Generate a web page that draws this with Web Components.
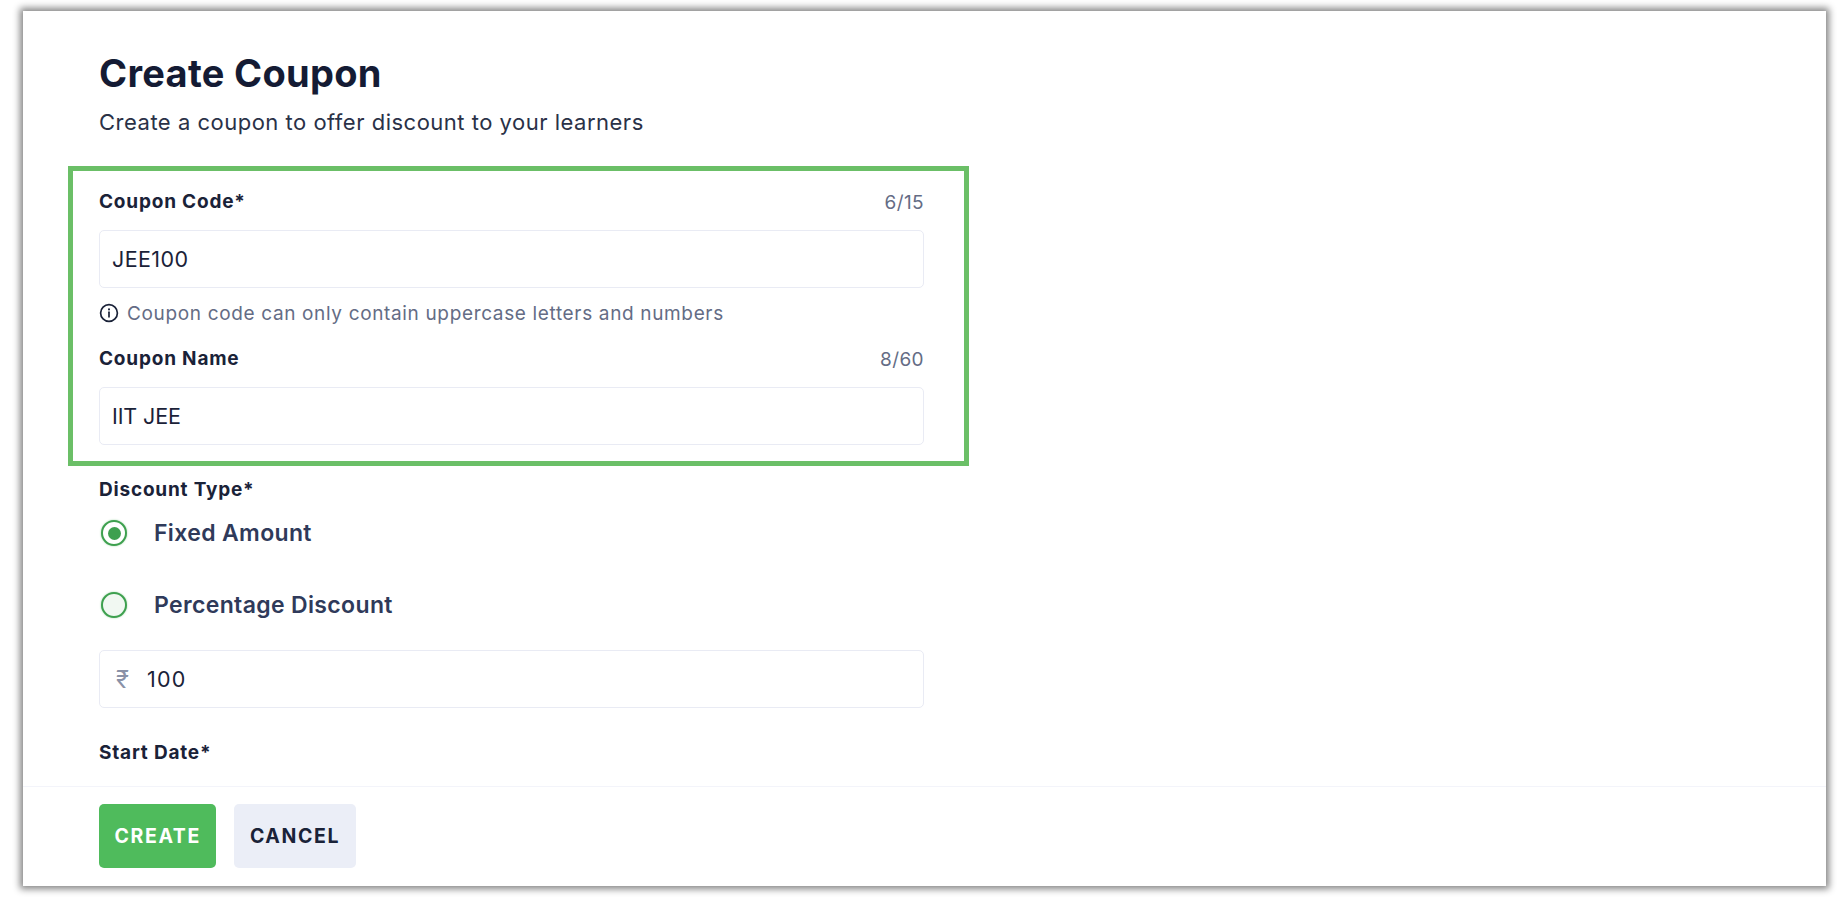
<!DOCTYPE html>
<html lang="en">
<head>
<meta charset="utf-8">
<title>Create Coupon</title>
<style>
  html, body { margin: 0; height: 100%; background: #fff; }
  body { font-family: "Inter", "Noto Sans", sans-serif; color: #1a2238; overflow: hidden; }
</style>
</head>
<body>
<coupon-panel>
  <coupon-heading title-text="Create Coupon" sub-text="Create a coupon to offer discount to your learners"></coupon-heading>
  <highlight-box>
    <text-field label="Coupon Code*" count="6/15" value="JEE100" hint="Coupon code can only contain uppercase letters and numbers" style="--value-spacing:0.4px"></text-field>
    <text-field label="Coupon Name" count="8/60" value="IIT JEE" style="--value-spacing:-0.1px"></text-field>
  </highlight-box>
  <field-label style="margin-top:33px">Discount Type*</field-label>
  <radio-option checked style="margin-top:-5px">Fixed Amount</radio-option>
  <radio-option>Percentage Discount</radio-option>
  <text-field value="100" prefix="₹" style="margin-top:9px;--value-spacing:1.2px"></text-field>
  <field-label style="margin-top:33px">Start Date*</field-label>
  <action-button slot="footer" kind="primary">CREATE</action-button>
  <action-button slot="footer">CANCEL</action-button>
</coupon-panel>

<script>
class CouponPanel extends HTMLElement {
    constructor() {
        super();
        this.attachShadow({ mode: 'open' });
        this.shadowRoot.innerHTML = `
        <style>
            :host {
                display: flex;
                flex-direction: column;
                box-sizing: border-box;
                margin: 11px 22px 11px 23px;
                height: 875px;
                background: #fff;
                box-shadow: 0 0 7px 3px #848484;
            }
            .content {
                flex: 1;
                min-height: 0;
                overflow: hidden;
                padding: 0 76px;
                width: 825px;
            }
            .footer {
                display: flex;
                gap: 18px;
                height: 100px;
                box-sizing: border-box;
                padding: 17px 76px 0;
                border-top: 1px solid #f3f4fa;
            }
        </style>
        <div class="content"><slot></slot></div>
        <div class="footer"><slot name="footer"></slot></div>
        `;
    }
}
customElements.define('coupon-panel', CouponPanel);

class CouponHeading extends HTMLElement {
    constructor() {
        super();
        this.attachShadow({ mode: 'open' });
        this.shadowRoot.innerHTML = `
        <style>
            :host { display: block; padding-top: 38px; }
            h1 {
                margin: 0;
                font-size: 38px;
                line-height: 48px;
                font-weight: 700;
                letter-spacing: 0.3px;
                color: #141b34;
            }
            p {
                margin: 11px 0 0;
                font-size: 22px;
                line-height: 28px;
                font-weight: 400;
                letter-spacing: 0.5px;
                color: #2a3147;
            }
        </style>
        <h1>${this.getAttribute('title-text')}</h1>
        <p>${this.getAttribute('sub-text')}</p>
        `;
    }
}
customElements.define('coupon-heading', CouponHeading);

class HighlightBox extends HTMLElement {
    constructor() {
        super();
        this.attachShadow({ mode: 'open' });
        this.shadowRoot.innerHTML = `
        <style>
            :host { display: block; position: relative; padding-top: 54px; }
            .frame {
                position: absolute;
                left: -31px;
                right: -45px;
                top: 30px;
                bottom: -21px;
                border: 5px solid #6bbf67;
                pointer-events: none;
            }
        </style>
        <slot></slot>
        <div class="frame"></div>
        `;
    }
}
customElements.define('highlight-box', HighlightBox);

class FieldLabel extends HTMLElement {
    constructor() {
        super();
        this.attachShadow({ mode: 'open' });
        this.shadowRoot.innerHTML = `
        <style>
            :host {
                display: block;
                font-size: 19px;
                line-height: 24px;
                font-weight: 700;
                letter-spacing: 0.8px;
                color: #1a2238;
            }
        </style>
        <slot></slot>
        `;
    }
}
customElements.define('field-label', FieldLabel);

class TextField extends HTMLElement {
    constructor() {
        super();
        this.attachShadow({ mode: 'open' });
        const label = this.getAttribute('label');
        const count = this.getAttribute('count');
        const hint = this.getAttribute('hint');
        const prefix = this.getAttribute('prefix');
        this.shadowRoot.innerHTML = `
        <style>
            :host { display: block; }
            .top {
                display: flex;
                justify-content: space-between;
                align-items: center;
                height: 24px;
                margin-bottom: 16px;
            }
            .count { font-size: 19px; letter-spacing: 0.4px; color: #646c85; }
            .box {
                display: flex;
                align-items: center;
                gap: 18px;
                height: 58px;
                box-sizing: border-box;
                padding: 0 12px;
                border: 1px solid #e9ebf4;
                border-radius: 5px;
                font-size: 21.5px;
                color: #1a2238;
            }
            .value { letter-spacing: var(--value-spacing, 0); }
            .prefix { color: #8a92a8; font-size: 24px; margin-left: 4px; }
            .hint {
                display: flex;
                align-items: center;
                gap: 8px;
                height: 24px;
                margin-top: 13px;
                margin-bottom: 22px;
                font-size: 19px;
                letter-spacing: 0.65px;
                color: #646c85;
            }
            .hint svg { width: 20px; height: 20px; flex: none; }
        </style>
        ${label ? `<div class="top"><field-label>${label}</field-label><span class="count">${count}</span></div>` : ''}
        <div class="box">
            ${prefix ? `<span class="prefix">${prefix}</span>` : ''}
            <span class="value">${this.getAttribute('value')}</span>
        </div>
        ${hint ? `<div class="hint">
            <svg viewBox="0 0 20 20" fill="none" stroke="#1a2238" stroke-width="1.7" stroke-linecap="round">
                <circle cx="10" cy="10" r="8.4"/>
                <path d="M10 9.2v4.6"/>
                <path d="M10 6.2v.3" stroke-width="2"/>
            </svg>
            <span>${hint}</span>
        </div>` : ''}
        `;
    }
}
customElements.define('text-field', TextField);

class RadioOption extends HTMLElement {
    constructor() {
        super();
        this.attachShadow({ mode: 'open' });
        const checked = this.hasAttribute('checked');
        this.shadowRoot.innerHTML = `
        <style>
            :host {
                display: flex;
                align-items: center;
                gap: 27px;
                height: 72px;
                padding-left: 2px;
                font-size: 23px;
                font-weight: 600;
                letter-spacing: 0.35px;
                color: #2f3a5a;
            }
            .dot {
                width: 26px;
                height: 26px;
                box-sizing: border-box;
                border-radius: 50%;
                border: 2.5px solid #3ea04f;
                background: ${checked ? '#fff' : '#f1f8f2'};
                box-shadow: 0 0 2px #9fd4a6;
                display: flex;
                align-items: center;
                justify-content: center;
            }
            .dot i {
                display: ${checked ? 'block' : 'none'};
                width: 13px;
                height: 13px;
                border-radius: 50%;
                background: #3ea04f;
            }
        </style>
        <span class="dot"><i></i></span>
        <span><slot></slot></span>
        `;
    }
}
customElements.define('radio-option', RadioOption);

class ActionButton extends HTMLElement {
    constructor() {
        super();
        this.attachShadow({ mode: 'open' });
        const primary = this.getAttribute('kind') === 'primary';
        this.shadowRoot.innerHTML = `
        <style>
            :host {
                display: flex;
                align-items: center;
                justify-content: center;
                height: 64px;
                box-sizing: border-box;
                padding: 0 15.5px;
                border-radius: 5px;
                font-size: 19.5px;
                font-weight: 700;
                letter-spacing: 1.6px;
                background: ${primary ? '#4fbb5c' : '#ebeef7'};
                color: ${primary ? '#fff' : '#1a2238'};
            }
        </style>
        <slot></slot>
        `;
    }
}
customElements.define('action-button', ActionButton);
</script>
</body>
</html>
